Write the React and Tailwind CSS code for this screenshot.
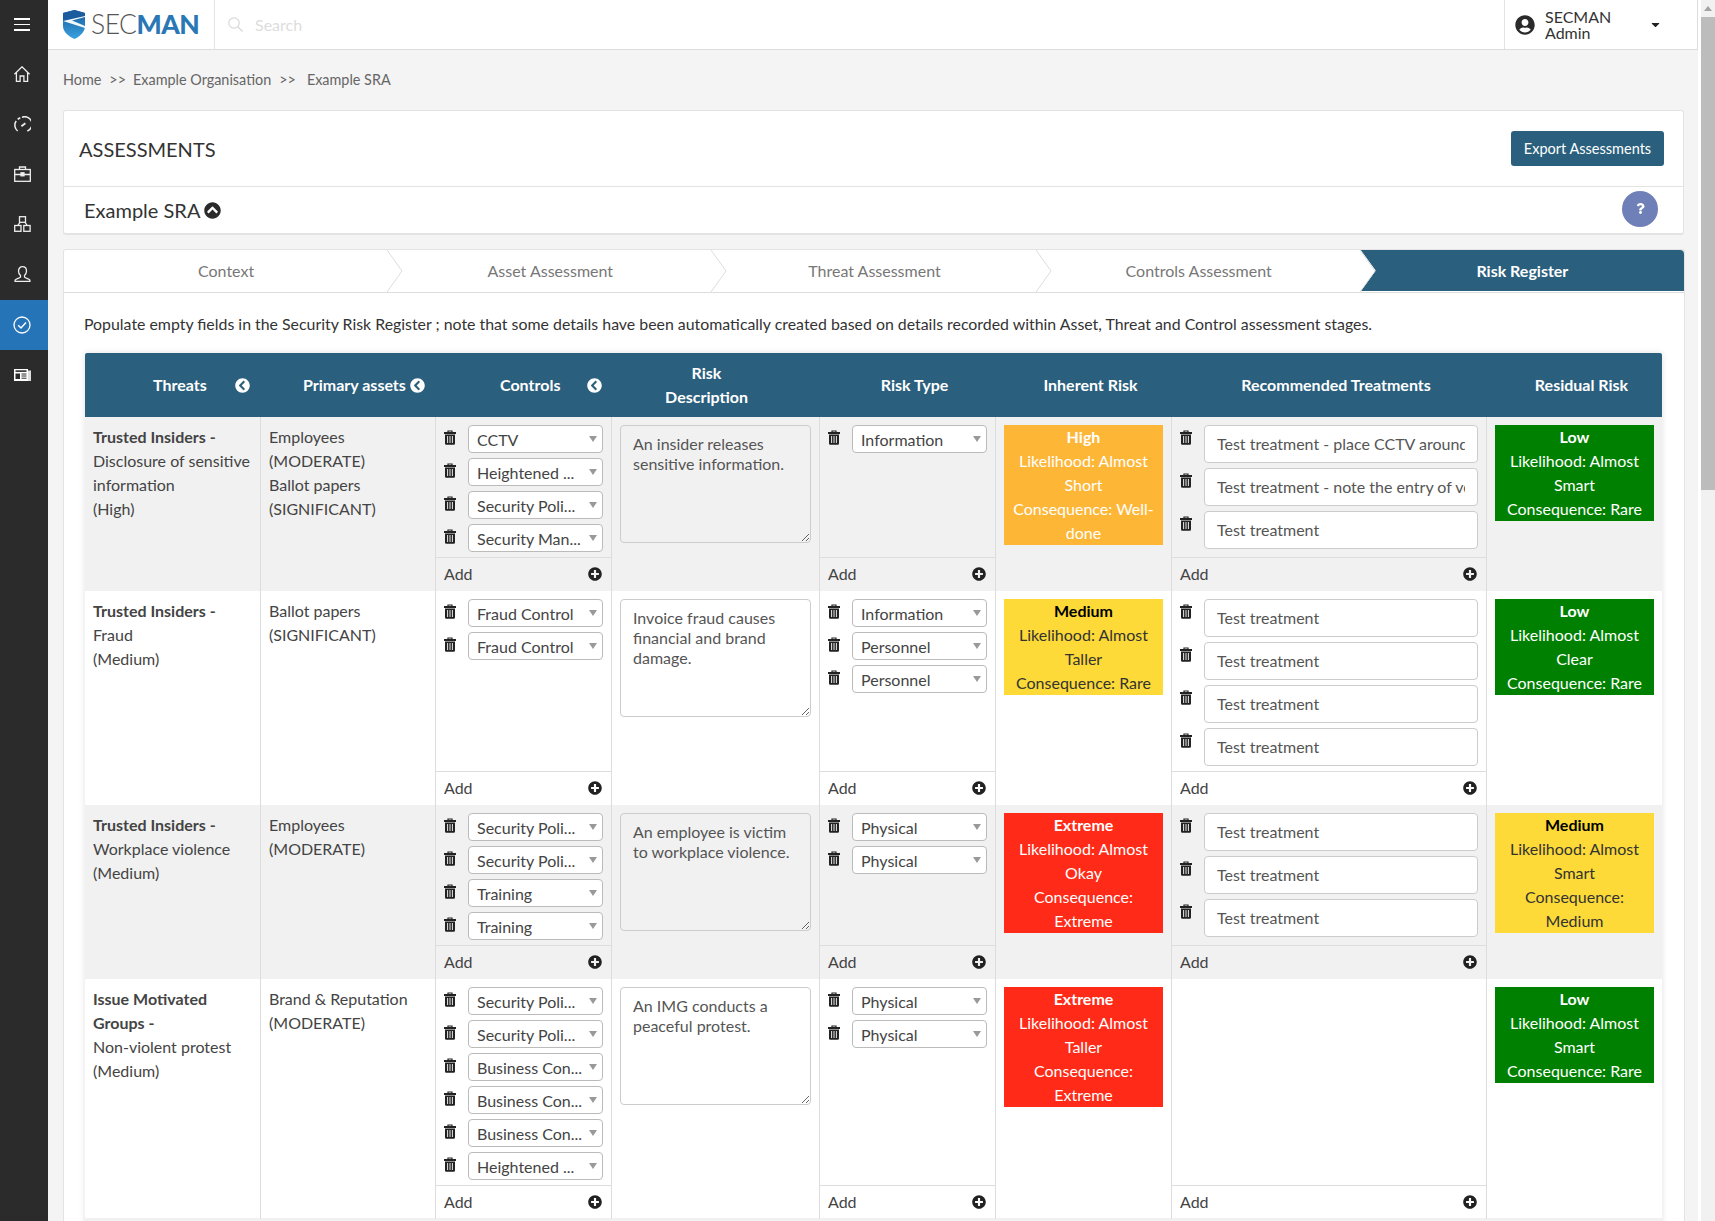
import React from "react";
import { FaChevronCircleLeft, FaChevronCircleUp, FaPlusCircle, FaUserCircle, FaQuestion, FaCaretDown } from "react-icons/fa";

const S = { fill: "none", stroke: "currentColor", strokeWidth: 1.3 };

function Trash() {
  return (
    <svg width="12" height="15" viewBox="0 0 12 15" className="shrink-0 text-[#222]">
      <path d="M4 2V1h4v1" fill="none" stroke="currentColor" strokeWidth="1.2" />
      <rect x="0" y="2" width="12" height="2" fill="currentColor" />
      <path d="M1 4.5h10V13.5a1.2 1.2 0 0 1-1.2 1.2H2.2A1.2 1.2 0 0 1 1 13.5z" fill="currentColor" />
      <path d="M3.6 6v7M6 6v7M8.4 6v7" stroke="#fff" strokeWidth="0.9" />
    </svg>
  );
}

const navIcons = [
  <svg key="h" width="16" height="16" viewBox="0 0 16 16" {...S}><path d="M.4 8.2 8 .8l7.6 7.4M2.4 6.600v8.800h3.700V10h3.800v5.400h3.700V6.600" /></svg>,
  <svg key="g" width="17" height="17" viewBox="0 0 17 17" fill="none" stroke="currentColor" strokeWidth="1.500"><path d="M3.700 15A7.300 7.300 0 0 1 2.200 5" /><path d="M3.700 3.400A7.300 7.300 0 0 1 6.300 1.700" /><path d="M8 1.200A7.300 7.300 0 0 1 13.300 15" /><path d="M7.400 10.200 11.400 7.200" strokeWidth="1.800" /></svg>,
  <svg key="b" width="17" height="16" viewBox="0 0 17 16" {...S}><rect x=".7" y="3.500" width="15.600" height="11.800" /><path d="M5.500 3.500V1h6v2.500M.7 8.500h15.600" /><rect x="7" y="6.800" width="3" height="3" fill="currentColor" /></svg>,
  <svg key="n" width="17" height="16" viewBox="0 0 17 16" {...S}><rect x="5.500" y=".7" width="6" height="5.600" /><rect x=".7" y="9.500" width="6.300" height="5.800" /><rect x="9.800" y="9.500" width="6.300" height="5.800" /><path d="M6 6.300 3.800 9.500M11 6.300l2.200 3.200" /></svg>,
  <svg key="u" width="17" height="16" viewBox="0 0 17 16" {...S}><path d="M8.500.7c2.500 0 4 1.900 4 4.400 0 2-.9 3.600-2 4.500v1.500c1.200 1.200 4.300 1.400 5.400 3v1.200H1.100v-1.200c1.100-1.600 4.200-1.800 5.400-3V9.600c-1.100-.9-2-2.500-2-4.500 0-2.500 1.500-4.400 4-4.400z" /></svg>,
  <svg key="c" width="18" height="18" viewBox="0 0 18 18" {...S}><circle cx="9" cy="9" r="8" /><path d="M5.200 9.300 8 12l5-5.400" strokeWidth="1.500" /></svg>,
  <svg key="p" width="17" height="14" viewBox="0 0 17 14"><path d="M0 1h14v12H0z" fill="#fff" /><path d="M14 2.500h3V13h-3z" fill="#ddd" /><rect x="1.500" y="2.300" width="11" height="1.600" fill="#2b2b2b" /><rect x="1.500" y="5.500" width="4.500" height="5.500" fill="#2b2b2b" /><path d="M7.500 6h5M7.500 8h5M7.500 10.200h5" stroke="#2b2b2b" /></svg>,
];

function Sidebar() {
  return (
    <aside className="flex w-12 shrink-0 flex-col bg-[#2b2b2b] text-[#eeeeee]">
      <div className="flex h-[49px] flex-col items-center justify-center gap-[4px] pr-[4px]">
        <span className="h-[1.5px] w-4 bg-white" />
        <span className="h-[1.5px] w-4 bg-white" />
        <span className="h-[1.5px] w-4 bg-white" />
      </div>
      {navIcons.map((icon, i) => (
        <div key={i} className={"flex h-[50px] items-center justify-center pr-[4px] " + (i === 5 ? "mt-px bg-[#2574b8] text-white" : "")}>
          {icon}
        </div>
      ))}
    </aside>
  );
}

function Logo() {
  return (
    <div className="flex items-center gap-[5px]">
      <svg width="23" height="29" viewBox="0 0 23 29">
        <defs>
          <linearGradient id="sh" x1="0" y1="0" x2="0" y2="1">
            <stop offset="0" stopColor="#155a9c" />
            <stop offset="1" stopColor="#3ba3e0" />
          </linearGradient>
        </defs>
        <path d="M0 3 11.500 0 22 3v13c0 6-5 10.500-10.500 13C5.500 26.500 0 22 0 16z" fill="url(#sh)" />
        <path d="M0 9.500 18 5l4-1v3L9 10.500l13 5.500v2L0 11z" fill="#fff" opacity="0.95" />
        <path d="M0 3 11.500 0 22 3v3L0 11z" fill="#1b5c9e" />
      </svg>
      <div className="flex items-baseline text-[26.5px] leading-none tracking-[-0.5px]">
        <span className="font-light text-[#555]">SEC</span>
        <span className="font-black text-[#2a77b5]">MAN</span>
      </div>
    </div>
  );
}

function TopBar() {
  return (
    <header className="flex h-[50px] shrink-0 items-stretch border-b border-r border-[#dddddd] bg-white">
      <div className="flex w-[167px] shrink-0 items-center border-r border-[#e3e3e3] pl-[15px]">
        <Logo />
      </div>
      <div className="flex flex-1 items-center pl-[13px] text-base text-[#dddddd]">
        <svg width="15" height="15" viewBox="0 0 15 15" fill="none" stroke="#d8d8d8" strokeWidth="1.2">
          <circle cx="6" cy="6" r="5.200" />
          <path d="m10 10 4.500 4.500" />
        </svg>
        <span className="ml-[12px]">Search</span>
      </div>
      <div className="flex w-[193px] shrink-0 items-center border-l border-[#e3e3e3] pl-[10px]">
        <FaUserCircle className="text-[20px] text-[#2a2a2a]" />
        <div className="ml-[10px] text-base leading-4 text-[#333]">
          <div>SECMAN</div>
          <div>Admin</div>
        </div>
        <FaCaretDown className="ml-[38px] text-[13px] text-[#222]" />
      </div>
    </header>
  );
}

function Chevron() {
  return (
    <svg width="16" height="42" viewBox="0 0 16 42" className="absolute right-[-15px] top-0 z-10">
      <polyline points="0,0 15,21 0,42" fill="#fff" stroke="#dddddd" />
    </svg>
  );
}

function Tabs() {
  const names = ["Context", "Asset Assessment", "Threat Assessment", "Controls Assessment"];
  return (
    <div className="flex h-[43px] border-b border-[#dddddd] pb-px text-base">
      {names.map((n) => (
        <div key={n} className="relative flex w-[324.2px] items-center justify-center text-[#777]">
          {n}
          <Chevron />
        </div>
      ))}
      <div className="flex flex-1 items-center justify-center rounded-tr bg-[#2b5f7e] font-bold text-white [clip-path:polygon(0_0,100%_0,100%_100%,0_100%,15px_50%)]">
        Risk Register
      </div>
    </div>
  );
}

const grid = "grid grid-cols-[176px_175px_176px_208px_176px_176px_315px_176px]";

function HeadIcon() {
  return <FaChevronCircleLeft className="text-[15px] text-white" />;
}

function TableHead() {
  const cell = "flex items-center";
  return (
    <div className={grid + " h-[64px] rounded-t-[2px] bg-[#2b5f7e] text-base font-bold text-white"}>
      <div className={cell + " pl-[68px]"}>Threats<span className="ml-[28px]"><HeadIcon /></span></div>
      <div className={cell + " pl-[42px]"}>Primary assets<span className="ml-[4px]"><HeadIcon /></span></div>
      <div className={cell + " pl-[64px]"}>Controls<span className="ml-[27px]"><HeadIcon /></span></div>
      <div className={cell + " justify-center pr-[19px] text-center leading-6"}>Risk<br />Description</div>
      <div className={cell + " justify-center pl-[13px]"}>Risk Type</div>
      <div className={cell + " justify-center pl-[13px]"}>Inherent Risk</div>
      <div className={cell + " justify-center pl-[13px]"}>Recommended Treatments</div>
      <div className={cell + " justify-center pl-[13px]"}>Residual Risk</div>
    </div>
  );
}

function AddBar() {
  return (
    <div className="mt-auto flex h-[34px] shrink-0 items-center justify-between border-t border-[#dddddd] pb-[2px] pl-[8px] pr-[9px] text-[#444]">
      <span>Add</span>
      <FaPlusCircle className="text-[14px] text-[#222]" />
    </div>
  );
}

function SelectList({ items }) {
  return (
    <div className="flex flex-col border-r border-[#dddddd]">
      <div className="flex flex-col pt-[8px]">
        {items.map((t, i) => (
          <div key={i} className="flex h-[33px] pl-[8px] pr-[8px]">
            <span className="mt-[5px] w-[24px] shrink-0"><Trash /></span>
            <div className="flex h-[28px] flex-1 items-center justify-between rounded-[4px] border border-[#bbbbbb] bg-white pl-[8px] pr-[5px] text-[#444]">
              <span className="whitespace-nowrap pt-[2px]">{t}</span>
              <span className="h-0 w-0 shrink-0 border-x-[4px] border-t-[6px] border-x-transparent border-t-[#999]" />
            </div>
          </div>
        ))}
      </div>
      <AddBar />
    </div>
  );
}

function TreatmentList({ items }) {
  return (
    <div className="flex flex-col border-r border-[#dddddd]">
      <div className="flex flex-col pt-[8px]">
        {items.map((t, i) => (
          <div key={i} className="flex h-[43px] pl-[8px] pr-[8px]">
            <span className="mt-[5px] w-[24px] shrink-0"><Trash /></span>
            <input
              readOnly
              value={t}
              className="h-[38px] min-w-0 flex-1 rounded-[4px] border border-[#cccccc] bg-white px-[12px] pb-[2px] text-[#555] outline-none"
            />
          </div>
        ))}
      </div>
      <AddBar />
    </div>
  );
}

const tones = {
  High: "bg-[#feb637] text-white",
  Medium: "bg-[#fdda37] text-[#333]",
  Extreme: "bg-[#ff2a17] text-white",
  Low: "bg-[#008000] text-white",
};

function RiskBox({ level, lines, last }) {
  return (
    <div className={"p-[8px] " + (last ? "pr-[9px]" : "border-r border-[#dddddd]")}>
      <div className={"text-center leading-6 " + tones[level]}>
        <div className={"font-bold " + (level === "Medium" ? "text-black" : "")}>{level}</div>
        {lines.map((l, i) => <div key={i}>{l}</div>)}
      </div>
    </div>
  );
}

function Row({ row, gray }) {
  return (
    <div className={grid + " leading-6 text-[#444] " + (gray ? "bg-[#f1f1f1]" : "bg-white")} style={{ height: row.h }}>
      <div className="border-r border-[#dddddd] p-[8px]">
        <div className="font-bold">{row.threat}</div>
        {row.detail.map((d) => <div key={d}>{d}</div>)}
      </div>
      <div className="border-r border-[#dddddd] p-[8px]">
        {row.assets.map((a) => <div key={a}>{a}</div>)}
      </div>
      <SelectList items={row.controls} />
      <div className="border-r border-[#dddddd] pl-[8px] pr-[8px] pt-[8px]">
        <textarea
          readOnly
          value={row.desc}
          className="block h-[118px] w-full rounded-[4px] border border-[#cccccc] bg-transparent px-[12px] pt-[8px] leading-[20px] text-[#555] outline-none"
        />
      </div>
      <SelectList items={row.types} />
      <RiskBox {...row.inherent} />
      <TreatmentList items={row.treatments} />
      <RiskBox {...row.residual} last />
    </div>
  );
}

const rows = [
  {
    h: 174,
    threat: "Trusted Insiders -",
    detail: ["Disclosure of sensitive", "information", "(High)"],
    assets: ["Employees", "(MODERATE)", "Ballot papers", "(SIGNIFICANT)"],
    controls: ["CCTV", "Heightened ...", "Security Poli...", "Security Man..."],
    desc: "An insider releases sensitive information.",
    types: ["Information"],
    inherent: { level: "High", lines: ["Likelihood: Almost", "Short", "Consequence: Well-", "done"] },
    treatments: ["Test treatment - place CCTV around the site", "Test treatment - note the entry of vehicles", "Test treatment"],
    residual: { level: "Low", lines: ["Likelihood: Almost", "Smart", "Consequence: Rare"] },
  },
  {
    h: 214,
    threat: "Trusted Insiders -",
    detail: ["Fraud", "(Medium)"],
    assets: ["Ballot papers", "(SIGNIFICANT)"],
    controls: ["Fraud Control", "Fraud Control"],
    desc: "Invoice fraud causes financial and brand damage.",
    types: ["Information", "Personnel", "Personnel"],
    inherent: { level: "Medium", lines: ["Likelihood: Almost", "Taller", "Consequence: Rare"] },
    treatments: ["Test treatment", "Test treatment", "Test treatment", "Test treatment"],
    residual: { level: "Low", lines: ["Likelihood: Almost", "Clear", "Consequence: Rare"] },
  },
  {
    h: 174,
    threat: "Trusted Insiders -",
    detail: ["Workplace violence", "(Medium)"],
    assets: ["Employees", "(MODERATE)"],
    controls: ["Security Poli...", "Security Poli...", "Training", "Training"],
    desc: "An employee is victim to workplace violence.",
    types: ["Physical", "Physical"],
    inherent: { level: "Extreme", lines: ["Likelihood: Almost", "Okay", "Consequence:", "Extreme"] },
    treatments: ["Test treatment", "Test treatment", "Test treatment"],
    residual: { level: "Medium", lines: ["Likelihood: Almost", "Smart", "Consequence:", "Medium"] },
  },
  {
    h: 239,
    threat: "Issue Motivated Groups -",
    detail: ["Non-violent protest", "(Medium)"],
    assets: ["Brand & Reputation", "(MODERATE)"],
    controls: ["Security Poli...", "Security Poli...", "Business Con...", "Business Con...", "Business Con...", "Heightened ..."],
    desc: "An IMG conducts a peaceful protest.",
    types: ["Physical", "Physical"],
    inherent: { level: "Extreme", lines: ["Likelihood: Almost", "Taller", "Consequence:", "Extreme"] },
    treatments: [],
    residual: { level: "Low", lines: ["Likelihood: Almost", "Smart", "Consequence: Rare"] },
  },
];

export default function App() {
  return (
    <div className="flex h-[1221px] overflow-hidden bg-[#f4f4f4] font-['Lato',sans-serif] text-base text-[#333]">
      <Sidebar />
      <div className="flex min-w-0 flex-1 flex-col">
        <TopBar />
        <nav className="flex h-[60px] shrink-0 items-center pl-[15px] text-[14.4px] text-[#666]">
          <span>Home</span>
          <span className="ml-[8px]">&gt;&gt;</span>
          <span className="ml-[7px]">Example Organisation</span>
          <span className="ml-[8px]">&gt;&gt;</span>
          <span className="ml-[11px]">Example SRA</span>
        </nav>
        <section className="ml-[15px] mr-[14px] rounded-[3px] border border-b-2 border-[#e3e3e3] bg-white">
          <div className="flex h-[76px] items-center justify-between border-b border-[#e3e3e3] pl-[15px] pr-[19px]">
            <h1 className="text-[20px] text-[#333]">ASSESSMENTS</h1>
            <button className="h-[35px] w-[153px] rounded-[3px] bg-[#2b5f7e] text-[14.5px] text-white">Export Assessments</button>
          </div>
          <div className="flex h-[46px] items-center justify-between pl-[20px] pr-[25px]">
            <div className="flex items-center gap-[4px] text-[20px]">
              Example SRA
              <FaChevronCircleUp className="text-[17px] text-[#2a2a2a]" />
            </div>
            <div className="mb-[3px] flex h-[36px] w-[36px] items-center justify-center rounded-full bg-[#6f80b8] text-white">
              <FaQuestion className="text-[11px]" />
            </div>
          </div>
        </section>
        <section className="ml-[15px] mr-[13px] mt-[14px] min-h-0 flex-1 rounded-t-[3px] border-l border-r border-t border-[#e3e3e3] bg-white">
          <Tabs />
          <p className="mb-[17px] mt-[19px] whitespace-nowrap pl-[20px] text-[15.88px] leading-6 text-[#333]">
            Populate empty fields in the Security Risk Register ; note that some details have been automatically created based on details recorded within Asset, Threat and Control assessment stages.
          </p>
          <div className="ml-[21px] mr-[22px] shadow-[0_0_6px_rgba(0,0,0,0.12)]">
            <TableHead />
            {rows.map((r, i) => <Row key={i} row={r} gray={i % 2 === 0} />)}
            <div className="h-[20px] bg-[#f1f1f1]" />
          </div>
        </section>
      </div>
      <div className="flex w-[17px] shrink-0 flex-col bg-white pl-[3px]">
        <div className="flex h-[17px] items-center justify-center bg-[#f1f1f1]">
          <span className="h-0 w-0 border-x-[4px] border-b-[5px] border-x-transparent border-b-[#a3a3a3]" />
        </div>
        <div className="h-[473px] bg-[#bcbcbc]" />
        <div className="flex-1 bg-[#f1f1f1]" />
      </div>
    </div>
  );
}
